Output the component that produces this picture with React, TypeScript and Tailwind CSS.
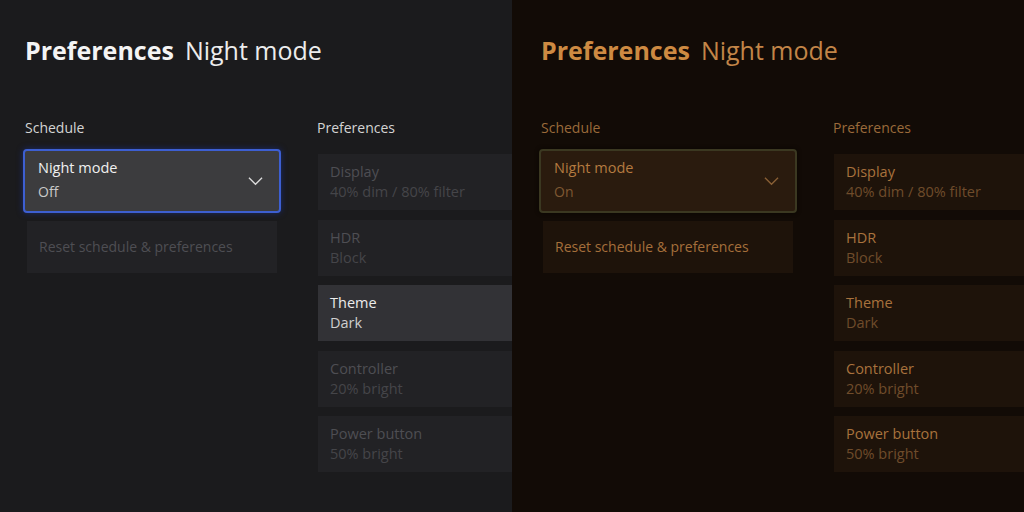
import type { ReactNode } from "react";

type Theme = "dark" | "night";

const font = { fontFamily: '"Open Sans", "Noto Sans", "Liberation Sans", sans-serif' };

const prefs = [
  { title: "Display", value: "40% dim / 80% filter" },
  { title: "HDR", value: "Block" },
  { title: "Theme", value: "Dark" },
  { title: "Controller", value: "20% bright" },
  { title: "Power button", value: "50% bright" },
];

function Chevron({ className }: { className: string }) {
  return (
    <svg viewBox="0 0 16 10" className={className} fill="none" stroke="currentColor" strokeWidth="1.4">
      <path d="M1 1.5 L8 8.5 L15 1.5" />
    </svg>
  );
}

function Card({ children, className }: { children: ReactNode; className: string }) {
  return <div className={`flex flex-col justify-center px-[12px] ${className}`}>{children}</div>;
}

function Panel({ theme }: { theme: Theme }) {
  const night = theme === "night";
  return (
    <div
      className={`w-[512px] h-[512px] overflow-hidden shrink-0 ${night ? "bg-[#120b06] pl-[29px]" : "bg-[#1b1b1d] pl-[25px]"}`}
      style={font}
    >
      <h1 className="pt-[32px] text-[25px] leading-[36px] whitespace-nowrap">
        <span className={`font-bold ${night ? "text-[#cd8a42]" : "text-[#f4f4f4]"}`}>Preferences</span>
        <span className={`ml-[11px] ${night ? "text-[#c28548]" : "text-[#ececec]"}`}>Night mode</span>
      </h1>

      <div className="mt-[50px] flex gap-[39px] w-[620px]">
        <div className="w-[254px] shrink-0">
          <div className={`text-[14px] leading-[20px] ${night ? "text-[#9a6a3a]" : "text-[#d4d4d4]"}`}>Schedule</div>
          <div
            className={`mt-[11px] -mx-[2px] h-[64px] rounded-[4px] border-2 flex items-center justify-between pl-[13px] pr-[16px] ${
              night
                ? "bg-[#2a1b0e] border-[#3b3821] shadow-[0_0_4px_#0a0603]"
                : "bg-[#3c3c3e] border-[#3d5fd2] shadow-[0_0_6px_#1a2a6a]"
            }`}
          >
            <div className="flex flex-col">
              <span className={`text-[14.5px] leading-[22px] ${night ? "text-[#b47a40]" : "text-[#f0f0f0]"}`}>Night mode</span>
              <span className={`text-[14px] leading-[26px] ${night ? "text-[#7f5832]" : "text-[#c9c9c9]"}`}>
                {night ? "On" : "Off"}
              </span>
            </div>
            <Chevron className={`w-[15px] h-[10px] ${night ? "text-[#8a6036]" : "text-[#dcdcdc]"}`} />
          </div>
          <Card className={`mt-[8px] mx-[2px] h-[52px] ${night ? "bg-[#1e130a]" : "bg-[#222225]"}`}>
            <span className={`text-[14px] leading-[20px] ${night ? "text-[#a56f3b]" : "text-[#4e4e53]"}`}>
              Reset schedule &amp; preferences
            </span>
          </Card>
        </div>

        <div className="flex-1">
          <div className={`text-[14px] leading-[20px] -ml-[1px] ${night ? "text-[#9a6a3a]" : "text-[#d4d4d4]"}`}>Preferences</div>
          <div className="mt-[16px] flex flex-col gap-[9.5px]">
            {prefs.map((p) => {
              const active = !night && p.title === "Theme";
              const bg = night ? "bg-[#1e130a]" : active ? "bg-[#323236]" : "bg-[#222225]";
              const titleColor = night ? "text-[#a8723d]" : active ? "text-[#ececec]" : "text-[#4e4e53]";
              const valueColor = night ? "text-[#6f4c2b]" : active ? "text-[#cfcfcf]" : "text-[#454549]";
              return (
                <Card key={p.title} className={`h-[56px] ${bg}`}>
                  <span className={`text-[14.5px] leading-[20px] ${titleColor}`}>{p.title}</span>
                  <span className={`text-[14.5px] leading-[20px] ${valueColor}`}>{p.value}</span>
                </Card>
              );
            })}
          </div>
        </div>
      </div>
    </div>
  );
}

export default function App() {
  return (
    <div className="flex w-[1024px] h-[512px] overflow-hidden">
      <Panel theme="dark" />
      <Panel theme="night" />
    </div>
  );
}
